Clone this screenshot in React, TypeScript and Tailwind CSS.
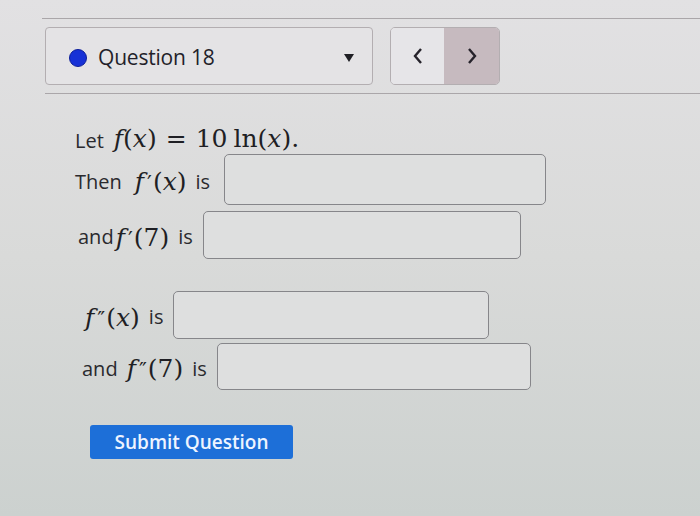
import React from "react";

const sans = { fontFamily: '"Open Sans", "Liberation Sans", sans-serif' };
const serif = { fontFamily: '"DejaVu Serif", "Liberation Serif", serif' };

function F({ primes = "" }: { primes?: string }) {
  return (
    <span style={serif}>
      <span className="italic">f</span>
      {primes && <span className="text-[0.85em] ml-[3px] mr-[1px]">{primes}</span>}
    </span>
  );
}

function X() {
  return (
    <span style={serif} className="italic">
      x
    </span>
  );
}

function Paren({ children }: { children: React.ReactNode }) {
  return <span style={serif}>({children})</span>;
}

function AnswerRow({
  offset,
  labelW,
  boxW,
  boxH,
  top,
  children,
}: {
  offset: string;
  labelW: string;
  boxW: string;
  boxH: string;
  top: string;
  children: React.ReactNode;
}) {
  return (
    <div className={`flex items-center ${offset} ${top}`}>
      <div className={`${labelW} pt-[4px] text-[20px] text-[#2a2a2e] whitespace-nowrap flex items-center`}>
        {children}
      </div>
      <input
        className={`${boxW} ${boxH} rounded-[5px] border-[1.5px] border-[#86868a] bg-[#dedfdf] outline-none`}
        type="text"
      />
    </div>
  );
}

export default function App() {
  return (
    <div
      style={sans}
      className="w-[700px] h-[516px] overflow-hidden bg-gradient-to-b from-[#e2e1e3] via-[#d9dad9] to-[#ccd1cf]"
    >
      <div className="pt-[18px] pl-[42px]">
        <div className="border-t border-[#aaa6a9]" />
      </div>

      {/* header */}
      <div className="ml-[45px] mt-[8px] flex items-center gap-[17px]">
        <div className="w-[328px] h-[58px] rounded-[4px] border border-[#b3aeb1] bg-[#e4e3e5] flex items-center px-[23px] pt-[4px]">
          <span className="w-[18px] h-[18px] rounded-full bg-[#1731d6] border border-[#0d1f9a]" />
          <span className="ml-[11px] text-[21px] text-[#231f2a] tracking-[-0.2px]">Question 18</span>
          <svg className="ml-auto mr-[-6px]" width="12" height="10" viewBox="0 0 12 10">
            <path d="M1 1 L11 1 L6 9 Z" fill="#1f1f24" />
          </svg>
        </div>
        <div className="w-[110px] h-[58px] rounded-[5px] border border-[#b3aeb1] flex overflow-hidden">
          <div className="w-[53px] bg-[#e6e5e8] flex items-center justify-center">
            <svg width="12" height="18" viewBox="0 0 12 18">
              <path d="M9 2 L3 9 L9 16" fill="none" stroke="#26232b" strokeWidth="2.4" />
            </svg>
          </div>
          <div className="flex-1 bg-[#c6babf] flex items-center justify-center">
            <svg width="12" height="18" viewBox="0 0 12 18">
              <path d="M3 2 L9 9 L3 16" fill="none" stroke="#26232b" strokeWidth="2.4" />
            </svg>
          </div>
        </div>
      </div>

      <div className="mt-[8px] ml-[45px] border-t border-[#aaa6a9]" />

      {/* question body */}
      <div className="ml-[75px] mt-[30px] h-[30px] flex items-center text-[20px] text-[#2a2a2e]">
        <span className="pt-[4px]">Let</span>
        <span className="ml-[10px] text-[25px] flex items-center text-[#1f1f24]">
          <F />
          <Paren>
            <X />
          </Paren>
          <span style={serif} className="mx-[9px]">=</span>
          <span style={serif}>10</span>
          <span style={serif} className="ml-[6px]">ln</span>
          <Paren>
            <X />
          </Paren>
          <span style={serif}>.</span>
        </span>
      </div>

      <AnswerRow offset="ml-[75px]" labelW="w-[149px]" boxW="w-[322px]" boxH="h-[51px]" top="mt-0">
        <span>Then</span>
        <span className="ml-[13px] mr-[9px] text-[25px] text-[#1f1f24]">
          <F primes="′" />
          <Paren>
            <X />
          </Paren>
        </span>
        <span>is</span>
      </AnswerRow>

      <AnswerRow offset="ml-[78px]" labelW="w-[125px]" boxW="w-[318px]" boxH="h-[48px]" top="mt-[6px]">
        <span>and</span>
        <span className="ml-[2px] mr-[9px] text-[25px] text-[#1f1f24]">
          <F primes="′" />
          <Paren>7</Paren>
        </span>
        <span>is</span>
      </AnswerRow>

      <AnswerRow offset="ml-[85px]" labelW="w-[88px]" boxW="w-[316px]" boxH="h-[48px]" top="mt-[32px]">
        <span className="mr-[9px] text-[25px] text-[#1f1f24]">
          <F primes="″" />
          <Paren>
            <X />
          </Paren>
        </span>
        <span>is</span>
      </AnswerRow>

      <AnswerRow offset="ml-[82px]" labelW="w-[135px]" boxW="w-[314px]" boxH="h-[47px]" top="mt-[4px]">
        <span>and</span>
        <span className="ml-[9px] mr-[9px] text-[25px] text-[#1f1f24]">
          <F primes="″" />
          <Paren>7</Paren>
        </span>
        <span>is</span>
      </AnswerRow>

      <button className="ml-[90px] mt-[35px] w-[203px] h-[34px] rounded-[3px] bg-[#1d6fd8] text-[#eef4ff] text-[19px] font-semibold flex items-center justify-center">
        Submit Question
      </button>
    </div>
  );
}
